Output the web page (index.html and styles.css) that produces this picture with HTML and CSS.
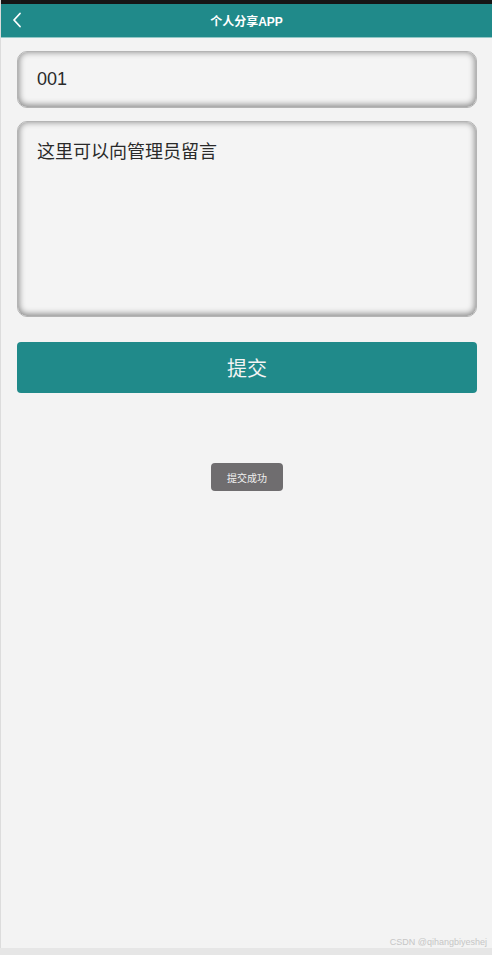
FILE: index.html
```html
<!DOCTYPE html>
<html lang="zh">
<head>
<meta charset="utf-8">
<title>个人分享APP</title>
<link rel="stylesheet" href="styles.css">
</head>
<body>
<div class="frame">
  <div class="topstrip"></div>
  <header class="header">
    <span class="back">
      <svg width="10" height="16" viewBox="0 0 10 16"><path d="M8 1.5 L2 8 L8 14.5" fill="none" stroke="#fff" stroke-width="1.8" stroke-linecap="round" stroke-linejoin="round"/></svg>
    </span>
    <h1 class="title">个人分享APP</h1>
  </header>
  <main class="content">
    <div class="field field-input">001</div>
    <div class="field field-area">这里可以向管理员留言</div>
    <button class="submit">提交</button>
  </main>
  <div class="toast">提交成功</div>
  <div class="watermark">CSDN @qihangbiyeshej</div>
</div>
<div class="bottomstrip"></div>
</body>
</html>
```
FILE: styles.css
```css
html, body {
  margin: 0;
  padding: 0;
  background: #e9e9e9;
  font-family: "Liberation Sans", "Noto Sans CJK SC", sans-serif;
}
.frame {
  position: relative;
  height: 948px;
  background: #f3f3f3;
  border-left: 1px solid #dcdcdc;
  box-sizing: border-box;
  overflow: hidden;
}
.topstrip {
  height: 4px;
  background: #161616;
}
.header {
  position: relative;
  height: 33px;
  background: #208a8a;
  border-bottom: 1px solid #93c7c6;
  display: flex;
  align-items: center;
  justify-content: center;
}
.back {
  position: absolute;
  left: 11px;
  top: 8px;
  display: flex;
}
.title {
  margin: 0;
  color: #fff;
  font-size: 12px;
  font-weight: bold;
}
.content {
  padding: 13px 15px 0 16px;
  display: flex;
  flex-direction: column;
}
.field {
  box-sizing: border-box;
  border: 1px solid #b4b4b4;
  border-radius: 10px;
  background: #f4f4f4;
  box-shadow: inset 0 -1px 6px 1px rgba(0, 0, 0, 0.45);
  color: #2a2a2a;
  font-size: 18px;
  padding-left: 19px;
}
.field-input {
  height: 57px;
  display: flex;
  align-items: center;
}
.field-area {
  margin-top: 13px;
  height: 196px;
  padding-top: 18px;
  line-height: 24px;
}
.submit {
  margin-top: 25px;
  height: 51px;
  border: none;
  border-radius: 4px;
  background: #208a8a;
  color: #f4f4f4;
  font-family: "Liberation Sans", "Noto Sans CJK SC", sans-serif;
  font-size: 20px;
}
.toast {
  position: absolute;
  left: 210px;
  top: 463px;
  width: 72px;
  height: 28px;
  border-radius: 4px;
  background: #6f6d6f;
  color: #f0f0f0;
  font-size: 10px;
  display: flex;
  align-items: center;
  justify-content: center;
}
.watermark {
  position: absolute;
  right: 5px;
  bottom: 1px;
  color: #c6c6c6;
  font-size: 9px;
}
.bottomstrip {
  height: 7px;
  background: #e6e6e6;
}
```
